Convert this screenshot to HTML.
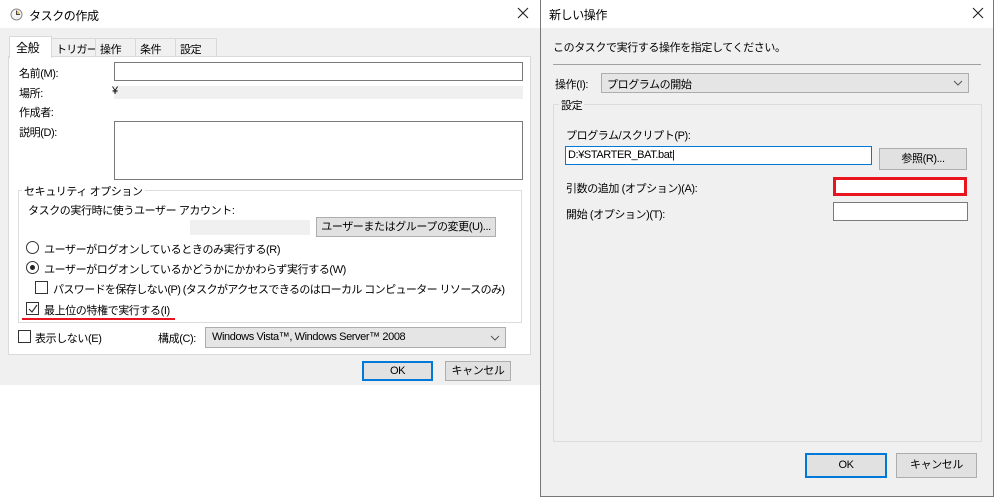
<!DOCTYPE html>
<html><head><meta charset="utf-8"><style>
*{box-sizing:border-box;margin:0;padding:0}
body{width:994px;height:497px;position:relative;background:#fff;font-family:"Liberation Sans","Noto Sans CJK JP",sans-serif;font-size:11px;letter-spacing:-0.4px;color:#000;overflow:hidden}
.a{position:absolute;white-space:nowrap}
.in{position:absolute;background:#fff;border:1px solid #7a7a7a;white-space:nowrap}
.btn{position:absolute;background:#e1e1e1;border:1px solid #adadad;text-align:center;white-space:nowrap}
.box{position:absolute;border:1px solid #dcdcdc}
.chk{position:absolute;width:13px;height:13px;border:1px solid #333;background:#fff}
.rad{position:absolute;width:13px;height:13px;border:1px solid #333;border-radius:50%;background:#fff}
.tab{position:absolute;top:38px;height:19px;border:1px solid #d9d9d9;background:#f0f0f0;padding:2px 0 0 4px;white-space:nowrap;overflow:hidden}
</style></head><body>
<div class="a" style="left:0;top:28px;width:540px;height:357px;background:#f0f0f0"></div>
<svg class="a" style="left:10px;top:8px" width="13" height="13"><circle cx="6.5" cy="6.5" r="5.5" fill="#f4f4f4" stroke="#888"/><path d="M6.5 6.5L10 6.5A4 4 0 0 0 6.5 2.5Z" fill="#e8c060"/><path d="M6.5 2.5V6.5H10" stroke="#444" fill="none"/></svg>
<div class="a" style="left:29px;top:7px;font-size:12px">タスクの作成</div>
<svg class="a" style="left:517px;top:7px" width="12" height="12"><path d="M1 1L11 11M11 1L1 11" stroke="#222" stroke-width="1.1"/></svg>
<div class="a" style="left:8px;top:56px;width:523px;height:299px;background:#fff;border:1px solid #d9d9d9"></div>
<div class="tab" style="left:51px;width:45px;letter-spacing:-0.8px">トリガー</div>
<div class="tab" style="left:95px;width:41px">操作</div>
<div class="tab" style="left:135px;width:41px">条件</div>
<div class="tab" style="left:175px;width:42px">設定</div>
<div class="a" style="left:9px;top:36px;width:43px;height:22px;background:#fff;border:1px solid #d9d9d9;border-bottom:none"></div>
<div class="a" style="left:16px;top:39px;font-size:12px">全般</div>
<div class="a" style="left:19px;top:65px">名前(M):</div>
<div class="in" style="left:114px;top:62px;width:409px;height:19px"></div>
<div class="a" style="left:19px;top:85px">場所:</div>
<div class="a" style="left:114px;top:86px;width:409px;height:13px;background:#f0f0f0"></div>
<div class="a" style="left:112px;top:85px">¥</div>
<div class="a" style="left:19px;top:104px">作成者:</div>
<div class="a" style="left:19px;top:124px">説明(D):</div>
<div class="in" style="left:114px;top:121px;width:409px;height:59px"></div>
<div class="box" style="left:18px;top:190px;width:504px;height:133px"></div>
<div class="a" style="left:22px;top:183px;background:#fff;padding:0 2px">セキュリティ オプション</div>
<div class="a" style="left:28px;top:202px">タスクの実行時に使うユーザー アカウント:</div>
<div class="a" style="left:190px;top:220px;width:120px;height:15px;background:#f0f0f0"></div>
<div class="btn" style="left:316px;top:217px;width:180px;height:20px;line-height:18px">ユーザーまたはグループの変更(U)...</div>
<div class="rad" style="left:26px;top:241px"></div>
<div class="a" style="left:44px;top:241px">ユーザーがログオンしているときのみ実行する(R)</div>
<div class="rad" style="left:26px;top:261px"></div><div class="a" style="left:30px;top:265px;width:5px;height:5px;border-radius:50%;background:#222"></div>
<div class="a" style="left:44px;top:261px">ユーザーがログオンしているかどうかにかかわらず実行する(W)</div>
<div class="chk" style="left:35px;top:281px"></div>
<div class="a" style="left:53px;top:281px;letter-spacing:-0.6px">パスワードを保存しない(P) (タスクがアクセスできるのはローカル コンピューター リソースのみ)</div>
<div class="chk" style="left:26px;top:302px"></div>
<svg class="a" style="left:27px;top:303px" width="12" height="12"><path d="M2 6L5 9L10 2" stroke="#333" fill="none" stroke-width="1.2"/></svg>
<div class="a" style="left:44px;top:302px">最上位の特権で実行する(I)</div>
<div class="a" style="left:22px;top:318px;width:153px;height:2px;background:#e8141e"></div>
<div class="chk" style="left:18px;top:330px"></div>
<div class="a" style="left:35px;top:330px">表示しない(E)</div>
<div class="a" style="left:158px;top:330px">構成(C):</div>
<div class="a" style="left:205px;top:327px;width:301px;height:21px;background:#e5e5e5;border:1px solid #adadad;padding:3px 6px">Windows Vista™, Windows Server™ 2008</div>
<svg class="a" style="left:490px;top:334px" width="10" height="8"><path d="M1 2L5 6L9 2" stroke="#555" fill="none"/></svg>
<div class="btn" style="left:362px;top:361px;width:71px;height:20px;line-height:16px;border:2px solid #0078d7">OK</div>
<div class="btn" style="left:445px;top:361px;width:66px;height:20px;line-height:18px">キャンセル</div>
<div class="a" style="left:540px;top:0;width:454px;height:497px;background:#f0f0f0;border:1px solid #777"></div>
<div class="a" style="left:541px;top:0;width:452px;height:28px;background:#fff"></div>
<div class="a" style="left:549px;top:6px;font-size:12px">新しい操作</div>
<svg class="a" style="left:972px;top:7px" width="12" height="12"><path d="M1 1L11 11M11 1L1 11" stroke="#222" stroke-width="1.1"/></svg>
<div class="a" style="left:553px;top:39px">このタスクで実行する操作を指定してください。</div>
<div class="a" style="left:553px;top:64px;width:428px;border-top:1px solid #a0a0a0"></div>
<div class="a" style="left:555px;top:76px">操作(I):</div>
<div class="a" style="left:601px;top:73px;width:368px;height:20px;background:#e5e5e5;border:1px solid #adadad;padding:2px 5px">プログラムの開始</div>
<svg class="a" style="left:953px;top:79px" width="10" height="8"><path d="M1 2L5 6L9 2" stroke="#555" fill="none"/></svg>
<div class="box" style="left:553px;top:104px;width:429px;height:338px"></div>
<div class="a" style="left:559px;top:97px;background:#f0f0f0;padding:0 2px">設定</div>
<div class="a" style="left:566px;top:127px">プログラム/スクリプト(P):</div>
<div class="in" style="left:565px;top:146px;width:307px;height:19px;border-color:#0078d7;padding:2px 2px">D:¥STARTER_BAT.bat|</div>
<div class="btn" style="left:879px;top:148px;width:88px;height:22px;line-height:20px">参照(R)...</div>
<div class="a" style="left:566px;top:180px">引数の追加 (オプション)(A):</div>
<div class="in" style="left:833px;top:177px;width:134px;height:19px;border:3px solid #e8141e"></div>
<div class="a" style="left:566px;top:206px">開始 (オプション)(T):</div>
<div class="in" style="left:833px;top:202px;width:135px;height:19px"></div>
<div class="btn" style="left:805px;top:453px;width:82px;height:25px;line-height:21px;border:2px solid #0078d7">OK</div>
<div class="btn" style="left:896px;top:453px;width:81px;height:25px;line-height:23px">キャンセル</div>
</body></html>
